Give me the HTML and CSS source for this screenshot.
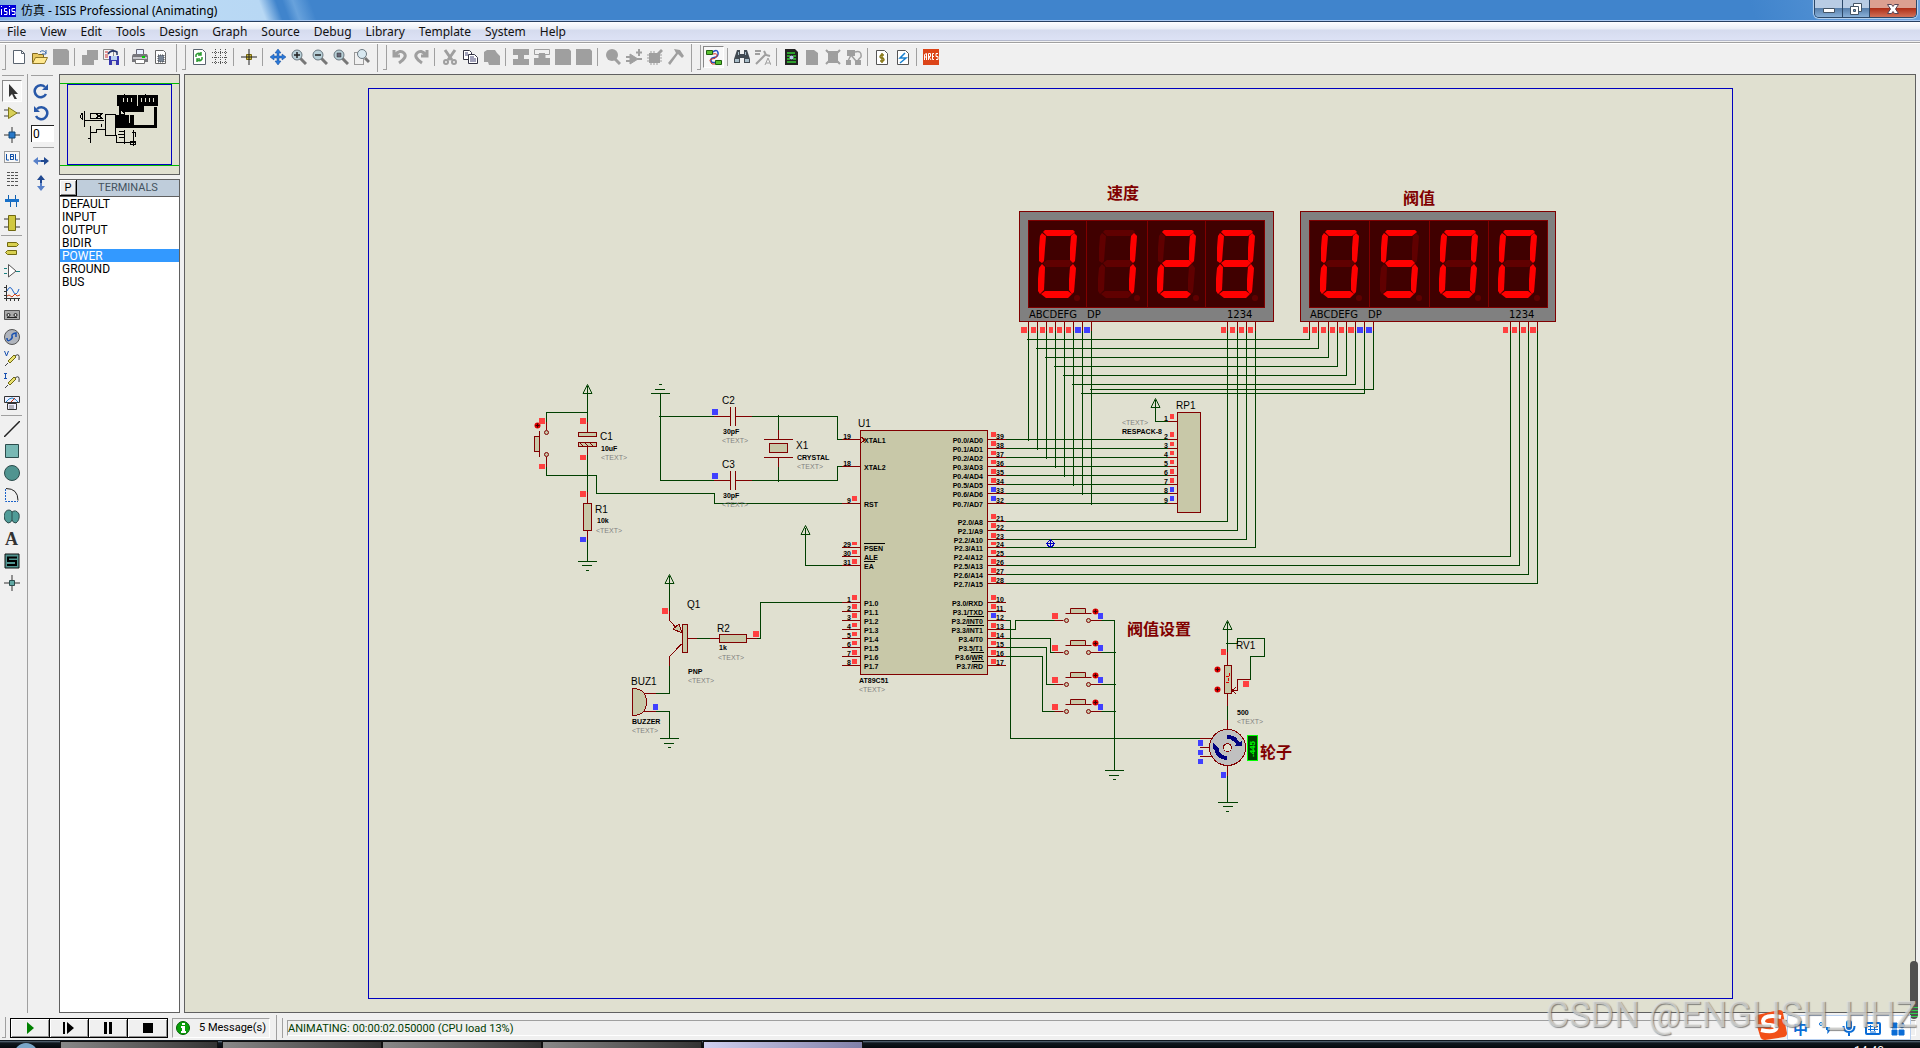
FILE: index.html
```html
<!DOCTYPE html>
<html lang="zh-CN">
<head>
<meta charset="utf-8">
<title>仿真 - ISIS Professional (Animating)</title>
<link rel="stylesheet" href="styles.css">
</head>
<body>
<svg class="sprite" aria-hidden="true">
  <symbol id="i-new" viewBox="0 0 16 16"><path d="M2.500 1.500h8l3 3v10h-11z" fill="#fff" stroke="#5a6470"/><path d="M10.500 1.500v3h3" fill="none" stroke="#5a6470"/></symbol>
  <symbol id="i-open" viewBox="0 0 16 16"><path d="M.5 13.500v-9h5l1 1h5v8z" fill="#e8c860" stroke="#806820"/><path d="M.5 14.500l3-6h12l-3 6z" fill="#ffe890" stroke="#907828"/><path d="M8 3q3-3 6 1M14 1v4h-4" fill="none" stroke="#3a6aa8"/></symbol>
  <symbol id="i-block" viewBox="0 0 16 16"><path d="M0 0h14l2 2v14H0z" fill="#9f9f9f"/></symbol>
  <symbol id="i-section" viewBox="0 0 16 16"><path d="M5 1h11v10h-4v5H0V6h5z" fill="#9f9f9f"/></symbol>
  <symbol id="i-export" viewBox="0 0 16 16"><path d="M.5.500h10v10h-10z" fill="#f4f4f4" stroke="#888"/><path d="M2 3h3M2 6h3M2 8h3" stroke="#c33"/><path d="M5 5q3-5 9-2v3" fill="none" stroke="#236" stroke-width="1.500"/><path d="M6 7h10v9H6z" fill="#3838b0"/><path d="M8 7h6v4H8z" fill="#b8d0f0"/><path d="M9 12h4v4H9z" fill="#ddd"/></symbol>
  <symbol id="i-print" viewBox="0 0 16 16"><path d="M4.500.500h7v6h-7z" fill="#e8f0ff" stroke="#667"/><path d="M1 5h14l1 2v6H0V7z" fill="#77777c"/><path d="M1 8h14v2H1z" fill="#c8c8cc"/><path d="M3.500 10.500h9v4h-9z" fill="#fff" stroke="#777"/><path d="M10 7h3v2h-3z" fill="#0c0"/></symbol>
  <symbol id="i-area" viewBox="0 0 16 16"><path d="M2.500 1.500h8l2 2v11h-10z" fill="#fff" stroke="#666"/><path d="M5 6h6v7H5z" fill="#788494" stroke="#444" stroke-dasharray="1 1"/></symbol>
  <symbol id="i-refresh" viewBox="0 0 16 16"><path d="M2.500.500h9l3 3v12h-12z" fill="#fff" stroke="#5a6470"/><path d="M5 8V6q2-3 5-1M10 3v3H7M11 8v2q-2 3-5 1M6 13v-3h3" fill="none" stroke="#2c9b32" stroke-width="1.500"/></symbol>
  <symbol id="i-grid" viewBox="0 0 16 16"><path d="M0 3.500h16M0 8.500h16M0 13.500h16M3.500 0v16M8.500 0v16M13.500 0v16" stroke="#555" stroke-dasharray="1 1"/></symbol>
  <symbol id="i-origin" viewBox="0 0 16 16"><path d="M5.500 5.500h5v5h-5z" fill="#c8b840" stroke="#786810"/><path d="M0 8h16M8 0v16" stroke="#222"/></symbol>
  <symbol id="i-pan" viewBox="0 0 16 16"><path d="M8 0l3 4H9v3h3V5l4 3-4 3V9H9v3h2l-3 4-3-4h2V9H4v2L0 8l4-3v2h3V4H5z" fill="#2a78d8" stroke="#174c98" stroke-width=".5"/></symbol>
  <symbol id="i-lens" viewBox="0 0 16 16"><path d="M9 9l6 6" stroke="#777" stroke-width="3"/><circle cx="6" cy="6" r="5" fill="#b8d0d8" stroke="#6b7880"/></symbol>
  <symbol id="i-zin" viewBox="0 0 16 16"><use href="#i-lens"/><path d="M3 6h6M6 3v6" stroke="#222" stroke-width="1.500"/></symbol>
  <symbol id="i-zout" viewBox="0 0 16 16"><use href="#i-lens"/><path d="M3 6h6" stroke="#222" stroke-width="1.500"/></symbol>
  <symbol id="i-zall" viewBox="0 0 16 16"><use href="#i-lens"/><path d="M4 4h4v4H4z" fill="#667" stroke="#333" stroke-width=".5"/></symbol>
  <symbol id="i-zarea" viewBox="0 0 16 16"><path d="M.5 3.500h9v12h-9z" fill="none" stroke="#444" stroke-dasharray="1 1"/><path d="M11 9l4 4" stroke="#777" stroke-width="3"/><circle cx="8" cy="5" r="4.500" fill="#d8e8f0" stroke="#6b7880"/></symbol>
  <symbol id="i-undo" viewBox="0 0 16 16"><path d="M2 1v6h6M3 6q5-6 9-2t-5 10" fill="none" stroke="#9f9f9f" stroke-width="3"/></symbol>
  <symbol id="i-redo" viewBox="0 0 16 16"><path d="M14 1v6H8M13 6Q8 0 4 4t5 10" fill="none" stroke="#9f9f9f" stroke-width="3"/></symbol>
  <symbol id="i-cut" viewBox="0 0 16 16"><path d="M3 1l7 10M13 1L6 11" stroke="#9f9f9f" stroke-width="3"/><circle cx="4" cy="13" r="2" fill="none" stroke="#9f9f9f" stroke-width="2"/><circle cx="12" cy="13" r="2" fill="none" stroke="#9f9f9f" stroke-width="2"/></symbol>
  <symbol id="i-copy" viewBox="0 0 16 16"><path d="M.5 1.500h6l2 2v7h-8z" fill="#fff" stroke="#334"/><path d="M5.500 5.500h6l3 3v6h-9z" fill="#fff" stroke="#334"/><path d="M2 4h3M2 6h3M7 8h4M7 10h6M7 12h6" stroke="#447"/></symbol>
  <symbol id="i-paste" viewBox="0 0 16 16"><path d="M3 1h8l2 3 3 3v9H5l-1-3H0V3z" fill="#9f9f9f"/></symbol>
  <symbol id="i-tie" viewBox="0 0 16 16"><path d="M0 0h16v6h-5v4h5v6H0v-6h5V6H0z" fill="#9f9f9f"/></symbol>
  <symbol id="i-tieo" viewBox="0 0 16 16"><path d="M.5.500h15v5H11v4h5v6H0v-6h5v-4H.5z" fill="none" stroke="#9f9f9f"/><path d="M0 10h16v6H0zM5 4h6v6H5z" fill="#9f9f9f"/></symbol>
  <symbol id="i-pick" viewBox="0 0 16 16"><circle cx="7" cy="6" r="6" fill="#9f9f9f"/><path d="M10 10l5 5" stroke="#9f9f9f" stroke-width="3"/></symbol>
  <symbol id="i-gate" viewBox="0 0 16 16"><path d="M4 5l8 5-8 5z" fill="#9f9f9f" stroke="#9f9f9f"/><path d="M0 8h5M0 12h5M11 10h5M13 0v7M10 3.500h6" stroke="#9f9f9f" stroke-width="2"/></symbol>
  <symbol id="i-pkg" viewBox="0 0 16 16"><path d="M2 4h8l4-4 2 2-3 3v9H2z" fill="#9f9f9f"/><path d="M0 6h15M0 9h15M0 12h15M4 2v14M7 2v14M10 4v12" stroke="#9f9f9f"/></symbol>
  <symbol id="i-hammer" viewBox="0 0 16 16"><path d="M6 0l6 1 4 6-2 2-4-4L2 16l-2-2L8 4z" fill="#9f9f9f"/></symbol>
  <symbol id="i-wire" viewBox="0 0 16 16"><path d="M6 3.500q5-4 6 0t-4 5-2 5h3" fill="none" stroke="#2050c0" stroke-width="1.500"/><path d="M7 5q5-1 4 2t-5 3 0 5h3" fill="none" stroke="#d03020"/><path d="M.5 1.500h6v4h-6zM9.500 11.500h6v4h-6z" fill="#58c030" stroke="#206010"/></symbol>
  <symbol id="i-find" viewBox="0 0 16 16"><path d="M3 1h3v4h4V1h3l3 9v4h-6V9H6v5H0v-4z" fill="#424a52"/><path d="M1 10h4v3H1zM11 10h4v3h-4zM4 3h1v3H4zM11 3h1v3h-1z" fill="#a8bcc8"/></symbol>
  <symbol id="i-tool" viewBox="0 0 16 16"><path d="M0 2h6M0 5h5M1 15L11 5M9 2l2 4 4 1" stroke="#9f9f9f" stroke-width="2" fill="none"/><path d="M10 16l3-7 3 7M11 14h4" fill="none" stroke="#9f9f9f"/></symbol>
  <symbol id="i-pcb" viewBox="0 0 16 16"><path d="M2 0h10l3 3v13H2z" fill="#222"/><path d="M4 4h8M4 7h3M10 7h3M4 10h3M10 10h3M4 13h9" stroke="#3c3" stroke-width="1.500"/><circle cx="8.500" cy="8.500" r="2" fill="#bce"/></symbol>
  <symbol id="i-page" viewBox="0 0 16 16"><path d="M2 1h8l4 3v12H2z" fill="#9f9f9f"/></symbol>
  <symbol id="i-del" viewBox="0 0 16 16"><path d="M3 2h10v12H3z" fill="#9f9f9f"/><path d="M1 1l14 14M15 1L1 15" stroke="#9f9f9f" stroke-width="2"/></symbol>
  <symbol id="i-tree" viewBox="0 0 16 16"><path d="M1 1h8v6H1zM0 11h5v5H0zM9 11h6v5H9z" fill="#9f9f9f"/><path d="M9 3q7-2 6 5l-3 3M5 6l-3 6M5 6l5 6" fill="none" stroke="#9f9f9f" stroke-width="1.500"/></symbol>
  <symbol id="i-bom" viewBox="0 0 16 16"><path d="M2.500 1.500h8l3 3v11h-11z" fill="#fff" stroke="#555"/><path d="M10 6H7q-2 2 0 3h2q2 2 0 3H6M8 4v10" fill="none" stroke="#887818" stroke-width="1.500"/></symbol>
  <symbol id="i-erc" viewBox="0 0 16 16"><path d="M2.500 1.500h8l3 3v11h-11z" fill="#fff" stroke="#555"/><path d="M10 4L5 9h6l-6 5" fill="none" stroke="#1880d0" stroke-width="1.500"/></symbol>
  <symbol id="i-ares" viewBox="0 0 16 16"><path d="M0 0h16v16H0z" fill="#dc4418"/><path d="M1.500 11V5.500l2-1V11M2 8h1M5.500 11V4.500h2v3h-2M6 8l2 3M11 4.500H9.500v6H11M9.500 7.500H11M15 4.500h-2v3h2v3h-2" fill="none" stroke="#fff"/></symbol>
  <symbol id="i-select" viewBox="0 0 16 16"><path d="M5 1v13l3-3 3 6 2-1-3-5h4z" fill="#333"/></symbol>
  <symbol id="i-comp" viewBox="0 0 16 16"><path d="M0 5h4M0 11h4M12 8h4" stroke="#444"/><path d="M4.500 2.500L13 8l-8.500 5.500z" fill="#d8d058" stroke="#807818"/></symbol>
  <symbol id="i-junc" viewBox="0 0 16 16"><path d="M0 8h16M8 0v16" stroke="#333"/><path d="M5 5h6v6H5z" fill="#2878c8" stroke="#124878"/></symbol>
  <symbol id="i-lbl" viewBox="0 0 16 16"><path d="M.5 2.500h15v11H.5z" fill="#f8f8f8" stroke="#444" stroke-dasharray="1 1"/><path d="M2.500 5v6H5M6.500 5.500h3v2h-3v3h3v-3M6.500 5v6M11.500 5v6H14" fill="none" stroke="#1050a8"/></symbol>
  <symbol id="i-text" viewBox="0 0 16 16"><path d="M3 1.500h11M3 4.500h11M3 7.500h11M3 10.500h11M3 14.500h11" stroke="#555" stroke-dasharray="3 1"/></symbol>
  <symbol id="i-bus" viewBox="0 0 16 16"><path d="M4.500 2v6M11.500 2v6M6.500 8v6M12.500 8v6" stroke="#1060b0"/><path d="M1 6h14v3H1z" fill="#1870c8"/></symbol>
  <symbol id="i-sub" viewBox="0 0 16 16"><path d="M0 4h16M0 12h16" stroke="#333"/><path d="M4.500.500h7v15h-7z" fill="#d0c840" stroke="#706810"/></symbol>
  <symbol id="i-term" viewBox="0 0 16 16"><path d="M3.500 1.500h9l2 2-2 2h-9z" fill="#d8d050" stroke="#706810"/><path d="M3.500 9.500h9v4h-9l-2-2z" fill="#d8d050" stroke="#706810"/></symbol>
  <symbol id="i-pin" viewBox="0 0 16 16"><path d="M4.500 1.500V14L12 8z" fill="#fff" stroke="#555"/><path d="M0 5.500h3M0 10.500h3M12 8.500h4" stroke="#188080"/></symbol>
  <symbol id="i-graph" viewBox="0 0 16 16"><path d="M2.500 0v16M0 13.500h16M0 2.500h2M0 6.500h2M0 10.500h2M6.500 14v2M10.500 14v2M14.500 14v2" stroke="#333"/><path d="M3 6q3-7 6 0t6-2" fill="none" stroke="#1860c8"/><path d="M3 11l2-1 3 2 3-3 2 2 3-1" fill="none" stroke="#d04018"/></symbol>
  <symbol id="i-tape" viewBox="0 0 16 16"><path d="M.5 3.500h15v9H.5z" fill="#aaa" stroke="#555"/><circle cx="4.500" cy="8" r="1.500" fill="#ddd" stroke="#222"/><circle cx="11.500" cy="8" r="1.500" fill="#ddd" stroke="#222"/><path d="M3 10.500h10" stroke="#222"/></symbol>
  <symbol id="i-gen" viewBox="0 0 16 16"><circle cx="8" cy="8" r="7.500" fill="#b0b4bc" stroke="#555"/><path d="M3 9q0 4 3 2t2-4 4-3v4" fill="none" stroke="#1850b0" stroke-width="1.500"/></symbol>
  <symbol id="i-probe" viewBox="0 0 16 16"><path d="M1 15l3-3M11 5q5-4 4 4" fill="none" stroke="#444"/><path d="M4 10l6-6 2 2-6 6z" fill="#e8e070" stroke="#706810"/></symbol>
  <symbol id="i-volt" viewBox="0 0 16 16"><use href="#i-probe"/><path d="M.5 0l2 5 2-5" fill="none" stroke="#1850b0"/></symbol>
  <symbol id="i-amp" viewBox="0 0 16 16"><use href="#i-probe"/><path d="M0 .5h3M0 5.500h3M1.500 0v6" stroke="#1850b0"/></symbol>
  <symbol id="i-meter" viewBox="0 0 16 16"><path d="M.5 1.500h15v6H.5zM3.500 8.500h9v6h-9z" fill="#eef" stroke="#333"/><path d="M2 7q6-8 12 0" fill="none" stroke="#28c"/><path d="M7 7l4-4" stroke="#c30"/><path d="M5 11h5M5 13h5" stroke="#777"/></symbol>
  <symbol id="i-line" viewBox="0 0 16 16"><path d="M0 16L16 0" stroke="#222" stroke-width="1.500"/></symbol>
  <symbol id="i-rect" viewBox="0 0 16 16"><path d="M1.500 1.500h13v13h-13z" fill="#78b8b4" stroke="#2c4c4c"/></symbol>
  <symbol id="i-circ" viewBox="0 0 16 16"><circle cx="8" cy="8" r="7.500" fill="#509490" stroke="#2c4c4c"/></symbol>
  <symbol id="i-arc" viewBox="0 0 16 16"><path d="M1.500 2v12.500H14" fill="none" stroke="#1860c8" stroke-dasharray="2 1"/><path d="M2 1.500q12 0 12 12" fill="none" stroke="#222"/></symbol>
  <symbol id="i-path" viewBox="0 0 16 16"><path d="M8 3q4-3 7 2 1 6-3 9-3 0-4-3-1 3-4 3-4-2-4-7 1-6 5-6 2 0 3 2z" fill="#509c98" stroke="#2c4c4c"/><path d="M8 3v8" stroke="#2c4c4c"/></symbol>
  <symbol id="i-sym" viewBox="0 0 16 16"><path d="M1 1h14v14H1z" fill="#509490" stroke="#111"/><path d="M13 4.500H4v3.500h8v4H3" fill="none" stroke="#000" stroke-width="2"/></symbol>
  <symbol id="i-mark" viewBox="0 0 16 16"><path d="M0 8h16M8 0v16" stroke="#333"/><path d="M5.500 5.500h5v5h-5z" fill="#60a8a4" stroke="#2c4c4c"/></symbol>
  <symbol id="i-cw" viewBox="0 0 16 16"><path d="M13 11a6 6 0 1 1-1-7" fill="none" stroke="#2858a8" stroke-width="2.500"/><path d="M15 1v6H9z" fill="#2858a8"/></symbol>
  <symbol id="i-ccw" viewBox="0 0 16 16"><path d="M3 11a6 6 0 1 0 1-7" fill="none" stroke="#2858a8" stroke-width="2.500"/><path d="M1 1v6h6z" fill="#2858a8"/></symbol>
  <symbol id="i-mx" viewBox="0 0 16 16"><path d="M0 8l5-4v3h3v2H5v3z" fill="#5880c8"/><path d="M16 8l-5-4v3H8v2h3v3z" fill="#204890"/></symbol>
  <symbol id="i-my" viewBox="0 0 16 16"><path d="M8 0l4 5H9v3H7V5H4z" fill="#204890"/><path d="M8 16l4-5H9V8H7v3H4z" fill="#5880c8"/></symbol>

  <polygon id="sa" points="7,0 35,0 37,2 32,6 9,6 5,2"/>
  <polygon id="sb" points="36,3 39,6 38,19 37,31 35,33 32,30 32,18 33,6"/>
  <polygon id="sc" points="35,34 38,38 37,50 36,62 34,64 31,60 31,50 32,37"/>
  <polygon id="sd" points="3,64 7,61 30,61 34,64 30,68 8,68"/>
  <polygon id="se" points="4,34 7,37 6,60 2,64 0,61 0,49 1,38"/>
  <polygon id="sf" points="4,3 8,6 7,18 6,31 4,33 1,31 1,18 2,6"/>
  <polygon id="sg" points="5,33 9,30 32,30 35,33 31,37 8,37"/>
  <g id="d8"><use href="#sa"/><use href="#sb"/><use href="#sc"/><use href="#sd"/><use href="#se"/><use href="#sf"/><use href="#sg"/></g>
  <g id="d0"><use href="#sa"/><use href="#sb"/><use href="#sc"/><use href="#sd"/><use href="#se"/><use href="#sf"/></g>
  <g id="d1"><use href="#sb"/><use href="#sc"/></g>
  <g id="d2"><use href="#sa"/><use href="#sb"/><use href="#sg"/><use href="#se"/><use href="#sd"/></g>
  <g id="d5"><use href="#sa"/><use href="#sf"/><use href="#sg"/><use href="#sc"/><use href="#sd"/></g>
  <g id="off"><use href="#d8"/><circle cx="39" cy="68" r="3"/></g>
  <g id="dot"><circle r="3" fill="#e00000" stroke="none"/><path d="M-2 0h4M0-2v4" stroke="#400000"/></g>
  <g id="switch"><path d="M-12 0h9M24 0h11" stroke="#800000"/><path d="M-1-7h26" stroke="#800000"/><path d="M4-12v5h15v-5z" fill="#c8c8a8" stroke="#800000"/><circle r="2" fill="#c8c8a8" stroke="#800000"/><circle cx="22" r="2" fill="#c8c8a8" stroke="#800000"/><use href="#dot" x="29" y="-9"/><path d="M-14.500-7.500h6v6h-6z" fill="#ff4040"/><path d="M31.500-7.500h5v6h-5z" fill="#4040ff"/></g>
</svg>

<header class="titlebar">
  <svg class="app-icon" viewBox="0 0 16 12" aria-hidden="true"><path d="M0 0h16v12H0z" fill="#0000d8"/><path d="M1.500 4v6M1.500 1v1M7 3.500H4.500v3H7v3H4M9.500 4v6M9.500 1v1M15 3.500h-3v3h3v3h-3" fill="none" stroke="#fff"/></svg>
  <h1>仿真 - ISIS Professional (Animating)</h1>
  <div class="win-buttons">
    <button class="wb wb-min" aria-label="Minimize"><svg viewBox="0 0 12 12"><path d="M.5 5.500h11v4H.5z" fill="#fff" stroke="#456"/></svg></button>
    <button class="wb wb-res" aria-label="Restore"><svg viewBox="0 0 12 12"><path d="M3.500.500h8v8h-8z" fill="#fff" stroke="#456"/><path d="M.5 3.500h8v8h-8z" fill="#fff" stroke="#456"/><path d="M3.500 6.500h2v2h-2z" fill="#69c" stroke="#456"/></svg></button>
    <button class="wb wb-close" aria-label="Close"><svg viewBox="0 0 12 12"><path d="M.5 1.500h4l1.500 2 1.500-2h4L8.500 6l3 4.500h-4L6 8.500l-1.500 2h-4l3-4.500z" fill="#fff" stroke="#545"/></svg></button>
  </div>
</header>

<nav class="menubar">
  <a href="#">File</a><a href="#">View</a><a href="#">Edit</a><a href="#">Tools</a><a href="#">Design</a><a href="#">Graph</a><a href="#">Source</a><a href="#">Debug</a><a href="#">Library</a><a href="#">Template</a><a href="#">System</a><a href="#">Help</a>
</nav>

<div class="toolbar">
  <div class="group">
    <button aria-label="New"><svg><use href="#i-new"/></svg></button><button aria-label="Open"><svg><use href="#i-open"/></svg></button><button aria-label="Save"><svg><use href="#i-block"/></svg></button><i class="sep"></i>
    <button aria-label="Import section"><svg><use href="#i-section"/></svg></button><button aria-label="Export section"><svg><use href="#i-export"/></svg></button><i class="sep"></i>
    <button aria-label="Print"><svg><use href="#i-print"/></svg></button><button aria-label="Mark output area"><svg><use href="#i-area"/></svg></button>
  </div>
  <div class="group">
    <button aria-label="Redraw"><svg><use href="#i-refresh"/></svg></button><button aria-label="Grid"><svg><use href="#i-grid"/></svg></button><i class="sep"></i>
    <button aria-label="Origin"><svg><use href="#i-origin"/></svg></button><i class="sep"></i>
    <button aria-label="Pan"><svg><use href="#i-pan"/></svg></button><button aria-label="Zoom in"><svg><use href="#i-zin"/></svg></button><button aria-label="Zoom out"><svg><use href="#i-zout"/></svg></button><button aria-label="Zoom all"><svg><use href="#i-zall"/></svg></button><button aria-label="Zoom area"><svg><use href="#i-zarea"/></svg></button>
  </div>
  <div class="group">
    <button aria-label="Undo"><svg><use href="#i-undo"/></svg></button><button aria-label="Redo"><svg><use href="#i-redo"/></svg></button><i class="sep"></i>
    <button aria-label="Cut"><svg><use href="#i-cut"/></svg></button><button aria-label="Copy"><svg><use href="#i-copy"/></svg></button><button aria-label="Paste"><svg><use href="#i-paste"/></svg></button><i class="sep"></i>
    <button aria-label="Block copy"><svg><use href="#i-tie"/></svg></button><button aria-label="Block move"><svg><use href="#i-tieo"/></svg></button><button aria-label="Block rotate"><svg><use href="#i-block"/></svg></button><button aria-label="Block delete"><svg><use href="#i-block"/></svg></button><i class="sep"></i>
    <button aria-label="Pick parts"><svg><use href="#i-pick"/></svg></button><button aria-label="Make device"><svg><use href="#i-gate"/></svg></button><button aria-label="Packaging"><svg><use href="#i-pkg"/></svg></button><button aria-label="Decompose"><svg><use href="#i-hammer"/></svg></button>
  </div>
  <div class="group tight">
    <button class="pressed" aria-label="Wire autorouter" aria-pressed="true"><svg><use href="#i-wire"/></svg></button><i class="sep"></i>
    <button aria-label="Search"><svg><use href="#i-find"/></svg></button><button aria-label="Property assignment"><svg><use href="#i-tool"/></svg></button><i class="sep"></i>
    <button aria-label="Design explorer"><svg><use href="#i-pcb"/></svg></button><button aria-label="New sheet"><svg><use href="#i-page"/></svg></button><button aria-label="Remove sheet"><svg><use href="#i-del"/></svg></button><button aria-label="Exit to parent"><svg><use href="#i-tree"/></svg></button><i class="sep"></i>
    <button aria-label="Bill of materials"><svg><use href="#i-bom"/></svg></button><button aria-label="Electrical rule check"><svg><use href="#i-erc"/></svg></button><i class="sep"></i>
    <button aria-label="Netlist to ARES"><svg><use href="#i-ares"/></svg></button>
  </div>
</div>

<main class="work">
  <div class="modes">
    <button class="pressed" aria-label="Selection"><svg><use href="#i-select"/></svg></button><button aria-label="Component"><svg><use href="#i-comp"/></svg></button><button aria-label="Junction"><svg><use href="#i-junc"/></svg></button><button aria-label="Wire label"><svg><use href="#i-lbl"/></svg></button><button aria-label="Text script"><svg><use href="#i-text"/></svg></button><button aria-label="Buses"><svg><use href="#i-bus"/></svg></button><button aria-label="Subcircuit"><svg><use href="#i-sub"/></svg></button>
    <i class="hsep"></i>
    <button aria-label="Terminals"><svg><use href="#i-term"/></svg></button><button aria-label="Device pins"><svg><use href="#i-pin"/></svg></button><button aria-label="Graph"><svg><use href="#i-graph"/></svg></button><button aria-label="Tape recorder"><svg><use href="#i-tape"/></svg></button><button aria-label="Generator"><svg><use href="#i-gen"/></svg></button><button aria-label="Voltage probe"><svg><use href="#i-volt"/></svg></button><button aria-label="Current probe"><svg><use href="#i-amp"/></svg></button><button aria-label="Instruments"><svg><use href="#i-meter"/></svg></button>
    <i class="hsep"></i>
    <button aria-label="2D line"><svg><use href="#i-line"/></svg></button><button aria-label="2D box"><svg><use href="#i-rect"/></svg></button><button aria-label="2D circle"><svg><use href="#i-circ"/></svg></button><button aria-label="2D arc"><svg><use href="#i-arc"/></svg></button><button aria-label="2D path"><svg><use href="#i-path"/></svg></button><button class="letter" aria-label="2D text">A</button><button aria-label="2D symbol"><svg><use href="#i-sym"/></svg></button><button aria-label="2D marker"><svg><use href="#i-mark"/></svg></button>
  </div>
  <div class="orient">
    <button aria-label="Rotate clockwise"><svg><use href="#i-cw"/></svg></button><button aria-label="Rotate anticlockwise"><svg><use href="#i-ccw"/></svg></button>
    <input type="text" value="0" aria-label="Rotation angle">
    <i class="hsep"></i>
    <button aria-label="X mirror"><svg><use href="#i-mx"/></svg></button><button aria-label="Y mirror"><svg><use href="#i-my"/></svg></button>
  </div>
  <aside class="side">
    <div class="overview">
      <svg viewBox="60 75 119 99" shape-rendering="crispEdges" role="img" aria-label="Overview">
        <path d="M60 83.500h119M60 165.500h119" stroke="#00b800"/><path d="M67.500 84.500h104v80h-104z" fill="none" stroke="#0000c0"/>
        <path d="M117 95h20v11h-20zM138 95h20v11h-20zM119 106h25v6h-25zM116 115h18v10h20v-18h3v21h-41z"/>
        <path d="M119 106h6v9h-6z"/><path d="M124.500 94v2M145.500 94v2" stroke="#000"/>
        <path d="M123 98h1v4h-1zM127 98h1v4h-1zM131 98h1v4h-1zM141 98h1v4h-1zM145 98h1v4h-1zM149 98h1v4h-1zM153 98h1v4h-1zM129 114h1v9h-1zM121 111l4 3h-4z" fill="#e0e0d0"/>
        <path d="M105.500 114.500h10v21h-10zM84.500 111v16M80 117l2-4v6zM84 120.500h20M90 113.500h13M90 118.500h13M90.500 113v5M96 114l6 4M102 114l-6 4M90.500 126v17M91 132.500h5v-3h9M88 138h3M101.500 124v3M116.500 135v7h18M124.500 130v14M119 131h5M118 134h6M119 137h5M133.500 130v16M132 132h3v5M130 141h5v3h-5z" fill="none" stroke="#000"/>
      </svg>
    </div>
    <section class="picker">
      <div class="picker-head"><button>P</button><h2>TERMINALS</h2></div>
      <ul><li>DEFAULT</li><li>INPUT</li><li>OUTPUT</li><li>BIDIR</li><li class="on">POWER</li><li>GROUND</li><li>BUS</li></ul>
    </section>
  </aside>
  <div class="canvas">
    <svg class="sheet" viewBox="185 75 1730 937" preserveAspectRatio="xMinYMin meet" role="img" aria-label="Schematic">
      <g shape-rendering="crispEdges" fill="none" stroke-width="1">
        <path d="M368.500 88.500h1364v910h-1364z" stroke="#0000c0"/>

        <!-- wires -->
        <g stroke="#004000">
          <path d="M1028.500 331v110M1037.500 331v119M1046.500 331v128M1055.500 331v137M1064.500 331v146M1073.500 331v155M1082.500 331v164M1091.500 331v174"/>
          <path d="M1027 339.500h282.500V331M1036 348.500h282.500V331M1045 357.500h283.500V331M1054 366.500h283.500V331M1063 375.500h283.500V331M1072 384.500h283.500V331M1081 393.500h283.500V331M1090 389.500h283.500V331"/>
          <path d="M1006 439.500h162M1006 448.500h162M1006 457.500h162M1006 466.500h162M1006 475.500h162M1006 484.500h162M1006 493.500h162M1006 503.500h162"/>
          <path d="M1006 521.500h221.500V331M1006 530.500h231.500V331M1006 539.500h240.500V331M1006 547.500h249.500V331M1006 556.500h504.500V331M1006 565.500h513.500V331M1006 574.500h522.500V331M1006 583.500h531.500V331"/>
          <path d="M1155.500 400v21.500h13"/>
          <path d="M587.500 386v36M588 412.500h-41.500v10M587.500 455v37M546.500 467v8.500h50v18h118v10H842M587.500 540v21"/>
          <path d="M660.500 394v86.500H714M659 416.500h55M752 416.500h85.500v23h5M752 480.500h85.500v-14h5M778.500 415v15M778.500 467v15"/>
          <path d="M805.500 528v37.500H842"/>
          <path d="M669.500 576v35M669.500 666v27.500H656M656 711.500h13.500V738M697 638.500h13M757 638.500h3.500v-36H842"/>
          <path d="M1006 620.500h4.500v118H1200M1006 629.500h9.500v-9h39.500M1006 638.500h44.500v14h5M1006 647.500h40.500v37h9M1006 656.500h36.500v55h13"/>
          <path d="M1101 620.500h13.500v150M1101 652.500h15M1101 684.500h15M1101 711.500h15"/>
          <path d="M1227.500 622v30M1226 643.500h11.500v-5h27v18h-14v23M1227.500 706v14M1227.500 776v26"/>
        </g>
        <!-- pins -->
        <g stroke="#800000">
          <path d="M1028.500 321v10M1037.500 321v10M1046.500 321v10M1055.500 321v10M1064.500 321v10M1073.500 321v10M1082.500 321v10M1091.500 321v10M1227.500 321v10M1237.500 321v10M1246.500 321v10M1255.500 321v10"/>
          <path d="M1309.500 321v10M1318.500 321v10M1328.500 321v10M1337.500 321v10M1346.500 321v10M1355.500 321v10M1364.500 321v10M1373.500 321v10M1510.500 321v10M1519.500 321v10M1528.500 321v10M1537.500 321v10"/>
          <path d="M988 439.500h18M988 448.500h18M988 457.500h18M988 466.500h18M988 475.500h18M988 484.500h18M988 493.500h18M988 503.500h18M988 521.500h18M988 530.500h18M988 539.500h18M988 547.500h18M988 556.500h18M988 565.500h18M988 574.500h18M988 583.500h18M988 602.500h18M988 611.500h18M988 620.500h18M988 629.500h18M988 638.500h18M988 647.500h18M988 656.500h18M988 665.500h18"/>
          <path d="M842 439.500h18M842 466.500h18M842 503.500h18M842 547.500h18M842 556.500h18M842 565.500h18M842 602.500h18M842 611.500h18M842 620.500h18M842 629.500h18M842 638.500h18M842 647.500h18M842 656.500h18M842 665.500h18"/>
          <path d="M1168 421.500h9M1168 439.500h9M1168 448.500h9M1168 457.500h9M1168 466.500h9M1168 475.500h9M1168 484.500h9M1168 493.500h9M1168 503.500h9"/>
          <path d="M860.500 430.500h127v244h-127zM1177.500 412.500h23v100h-23z" fill="#c8c8a8"/>
          <path d="M861 437l4 3-4 3"/>
          <!-- reset circuit -->
          <path d="M546.500 422v8M546.500 457v10M539.500 431v26M587.500 422v10M587.500 447v8M587.500 492v11M587.500 531v9"/>
          <path d="M534.500 436.500h5v15h-5zM578.500 432.500h18v4h-18zM583.500 503.500h8v27h-8z" fill="#c8c8a8"/>
          <path d="M578.500 442.500h18v4h-18z" fill="#c8c8a8"/><path d="M580 443l3 3M585 443l3 3M590 443l3 3"/>
          <!-- crystal -->
          <path d="M714 416.500h16.500M735.500 416.500H752M730.500 407v19M735.500 407v19M714 480.500h16.500M735.500 480.500H752M730.500 471v19M735.500 471v19"/>
          <path d="M778.500 430v9M764 439.500h29M764 457.500h29M778.500 458v9"/><path d="M769.500 443.500h18v9h-18z" fill="#c8c8a8"/>
          <!-- transistor, resistor, buzzer -->
          <path d="M669.500 611v9.500l12 13M681.500 644l-12 12.500v9M688 638.500h9M710 638.500h9M747 638.500h10M656 693.500h-14M656 711.500h-14"/>
          <path d="M673 629l6-5 3 9zM682.500 624.500h5v28h-5zM719.500 634.500h27v8h-27zM632.500 688.500v27q14 0 14-13.500t-14-13.500z" fill="#c8c8a8"/>
          <!-- potentiometer and motor -->
          <path d="M1227.500 652v13M1227.500 694v12M1227.500 720v10M1250 679.500h-12.500v11H1232M1236 687l-4 3.500 4 3.500M1200 738.500h12M1200 747.500h10M1200 756.500h12M1227.500 765v11"/>
          <path d="M1224.500 665.500h7v28h-7z" fill="#c8c8a8"/>
          <circle cx="1227.500" cy="747.500" r="18" fill="#c0c0c0"/><circle cx="1227.500" cy="747.500" r="4" fill="#e0e0d0"/>
          <path d="M1229 673v3M1226 676.500h3M1228.500 678v3M1226 682.500h3" stroke="#e00000"/>
        </g>
        <path d="M1227 737q9 0 12 9M1227 758q-9 0-11-10" stroke="#000080" stroke-width="4"/><path d="M1234 746h8v-5zM1220 749h-7v-6z" fill="#000080"/>
        <!-- overbars -->
        <path d="M864 543.500h21M864 561.500h11M967 616.500h17M967 625.500h17M971 652.500h13M972 661.500h12" stroke="#000"/>
        <path d="M1046 543.500h9M1050.500 539v9" stroke="#0000c0"/><circle cx="1050.500" cy="543.500" r="3" stroke="#0000c0"/>
        <path d="M1247.500 735.500h10v25h-10z" fill="#004000" stroke="#00ff00"/>
        <!-- LED displays -->
        <path d="M1019.500 211.500h254v110h-254zM1300.500 211.500h255v110h-255z" fill="#808080" stroke="#800000"/>
        <path d="M1028.500 220.500h236v87h-236zM1309.500 220.500h238v87h-238z" fill="#400000" stroke="#800000"/>
        <path d="M1086.500 221v86M1147.500 221v86M1205.500 221v86M1369.500 221v86M1429.500 221v86M1488.500 221v86" stroke="#800000"/>
      </g>
      <g fill="#600000"><use href="#off" x="1038" y="230"/><use href="#off" x="1098" y="230"/><use href="#off" x="1157" y="230"/><use href="#off" x="1216" y="230"/><use href="#off" x="1320" y="230"/><use href="#off" x="1380" y="230"/><use href="#off" x="1439" y="230"/><use href="#off" x="1498" y="230"/></g>
      <g fill="#ff0000"><use href="#d0" x="1038" y="230"/><use href="#d1" x="1098" y="230"/><use href="#d2" x="1157" y="230"/><use href="#d8" x="1216" y="230"/><use href="#d0" x="1320" y="230"/><use href="#d5" x="1380" y="230"/><use href="#d0" x="1439" y="230"/><use href="#d0" x="1498" y="230"/></g>
      <g fill="none">
        <path d="M587.500 384.500l-4.500 9h9zM805.500 525.500l-4.500 9h9zM669.500 574.500l-4.500 9h9zM1155.500 398.500l-4.500 9h9zM1227.500 620.500l-4.500 9h9z" stroke="#004000"/>
        <path d="M578 561.500h19M582 565.500h10M586 570.500h3M651 393.500h19M655 389.500h10M659 384.500h3M660 738.500h19M664 743.500h10M668 747.500h3M1105 770.500h19M1109 775.500h10M1113 779.500h3M1218 802.500h20M1223 806.500h10M1226 811.500h3" stroke="#004000"/>
        <g stroke="#800000"><circle cx="546.500" cy="432.500" r="2" fill="#c8c8a8"/><circle cx="546.500" cy="454.500" r="2" fill="#c8c8a8"/></g>
        <use href="#switch" x="1066.500" y="620.500"/><use href="#switch" x="1066.500" y="652.500"/><use href="#switch" x="1066.500" y="684.500"/><use href="#switch" x="1066.500" y="711.500"/>
        <use href="#dot" x="537.500" y="425.500"/><use href="#dot" x="1217.500" y="669.500"/><use href="#dot" x="1217.500" y="689.500"/>
      </g>
      <!-- logic state squares -->
      <g shape-rendering="crispEdges">
        <path fill="#ff4040" d="M1021 327h6v6h-6zM1031 327h5v6h-5zM1040 327h5v6h-5zM1049 327h4v6h-4zM1057 327h5v6h-5zM1066 327h5v6h-5zM1221 327h5v6h-5zM1230 327h5v6h-5zM1239 327h5v6h-5zM1248 327h5v6h-5zM1303 327h5v6h-5zM1312 327h5v6h-5zM1321 327h5v6h-5zM1330 327h5v6h-5zM1339 327h5v6h-5zM1348 327h6v6h-6zM1503 327h5v6h-5zM1512 327h5v6h-5zM1521 327h5v6h-5zM1530 327h6v6h-6z"/>
        <path fill="#ff4040" d="M991 432h5v5h-5zM991 441h5v5h-5zM991 451h5v4h-5zM991 460h5v4h-5zM991 469h5v5h-5zM991 478h5v5h-5zM991 514h5v5h-5zM991 523h5v5h-5zM991 533h5v5h-5zM991 542h5v3h-5zM991 550h5v4h-5zM991 559h5v5h-5zM991 568h5v5h-5zM991 577h5v5h-5zM991 595h5v5h-5zM991 604h5v5h-5zM991 623h5v5h-5zM991 632h5v5h-5zM991 641h5v4h-5zM991 650h5v5h-5zM991 659h5v5h-5z"/>
        <path fill="#ff4040" d="M852 496h5v5h-5zM852 542h5v3h-5zM852 550h5v4h-5zM852 559h5v5h-5zM852 595h5v5h-5zM852 604h5v5h-5zM852 613h5v5h-5zM852 623h5v4h-5zM852 632h5v4h-5zM852 641h5v4h-5zM852 650h5v5h-5zM852 659h5v5h-5z"/>
        <path fill="#ff4040" d="M1170 414h4v5h-4zM1170 432h4v5h-4zM1170 442h4v4h-4zM1170 451h4v4h-4zM1170 460h4v4h-4zM1170 469h4v5h-4zM1170 478h4v5h-4zM539 418h6v6h-6zM539 464h6v5h-6zM580 418h6v6h-6zM580 455h6v5h-6zM580 491h6v6h-6zM662 608h6v6h-6zM753 631h6v6h-6zM1221 649h5v6h-5zM1243 681h6v6h-6z"/>
        <path fill="#4040ff" d="M1075 327h6v6h-6zM1084 327h6v6h-6zM1357 327h6v6h-6zM1366 327h6v6h-6zM991 487h5v5h-5zM991 496h5v5h-5zM991 613h5v5h-5zM1170 487h4v5h-4zM1170 496h4v5h-4zM580 537h6v5h-6zM712 409h6v6h-6zM712 473h6v6h-6zM653 704h5v6h-5zM1198 740h5v6h-5zM1198 750h5v5h-5zM1198 759h5v5h-5zM1221 772h5v6h-5z"/>
      </g>
      <g class="t-cn"><text x="1107" y="199">速度</text><text x="1403" y="204">阀值</text><text x="1127" y="635">阀值设置</text><text x="1260" y="758">轮子</text></g>
      <g class="t-led"><text x="1029" y="318">ABCDEFG</text><text x="1087" y="318">DP</text><text x="1227" y="318">1234</text><text x="1310" y="318">ABCDEFG</text><text x="1368" y="318">DP</text><text x="1509" y="318">1234</text></g>
      <g class="t-ref"><text x="858" y="427">U1</text><text x="1176" y="409">RP1</text><text x="600" y="440">C1</text><text x="595" y="513">R1</text><text x="722" y="404">C2</text><text x="722" y="468">C3</text><text x="796" y="449">X1</text><text x="687" y="608">Q1</text><text x="717" y="632">R2</text><text x="631" y="685">BUZ1</text><text x="1236" y="649">RV1</text></g>
      <g class="t-val"><text x="859" y="683">AT89C51</text><text x="1122" y="434">RESPACK-8</text><text x="601" y="451">10uF</text><text x="597" y="523">10k</text><text x="723" y="434">30pF</text><text x="723" y="498">30pF</text><text x="797" y="460">CRYSTAL</text><text x="719" y="650">1k</text><text x="688" y="674">PNP</text><text x="632" y="724">BUZZER</text><text x="1237" y="715">500</text></g>
      <g class="t-gray"><text x="859" y="692">&lt;TEXT&gt;</text><text x="1122" y="425">&lt;TEXT&gt;</text><text x="601" y="460">&lt;TEXT&gt;</text><text x="596" y="533">&lt;TEXT&gt;</text><text x="722" y="443">&lt;TEXT&gt;</text><text x="722" y="507">&lt;TEXT&gt;</text><text x="797" y="469">&lt;TEXT&gt;</text><text x="718" y="660">&lt;TEXT&gt;</text><text x="688" y="683">&lt;TEXT&gt;</text><text x="632" y="733">&lt;TEXT&gt;</text><text x="1237" y="724">&lt;TEXT&gt;</text></g>
      <g class="t-val">
        <text x="864" y="443">XTAL1</text><text x="864" y="470">XTAL2</text><text x="864" y="507">RST</text><text x="864" y="551">PSEN</text><text x="864" y="560">ALE</text><text x="864" y="569">EA</text>
        <text x="864" y="606">P1.0</text><text x="864" y="615">P1.1</text><text x="864" y="624">P1.2</text><text x="864" y="633">P1.3</text><text x="864" y="642">P1.4</text><text x="864" y="651">P1.5</text><text x="864" y="660">P1.6</text><text x="864" y="669">P1.7</text>
        <text x="996" y="439">39</text><text x="996" y="448">38</text><text x="996" y="457">37</text><text x="996" y="466">36</text><text x="996" y="475">35</text><text x="996" y="484">34</text><text x="996" y="493">33</text><text x="996" y="503">32</text>
        <text x="996" y="521">21</text><text x="996" y="530">22</text><text x="996" y="539">23</text><text x="996" y="547">24</text><text x="996" y="556">25</text><text x="996" y="565">26</text><text x="996" y="574">27</text><text x="996" y="583">28</text>
        <text x="996" y="602">10</text><text x="996" y="611">11</text><text x="996" y="620">12</text><text x="996" y="629">13</text><text x="996" y="638">14</text><text x="996" y="647">15</text><text x="996" y="656">16</text><text x="996" y="665">17</text>
      </g>
      <g class="t-val t-end">
        <text x="983" y="443">P0.0/AD0</text><text x="983" y="452">P0.1/AD1</text><text x="983" y="461">P0.2/AD2</text><text x="983" y="470">P0.3/AD3</text><text x="983" y="479">P0.4/AD4</text><text x="983" y="488">P0.5/AD5</text><text x="983" y="497">P0.6/AD6</text><text x="983" y="507">P0.7/AD7</text>
        <text x="983" y="525">P2.0/A8</text><text x="983" y="534">P2.1/A9</text><text x="983" y="543">P2.2/A10</text><text x="983" y="551">P2.3/A11</text><text x="983" y="560">P2.4/A12</text><text x="983" y="569">P2.5/A13</text><text x="983" y="578">P2.6/A14</text><text x="983" y="587">P2.7/A15</text>
        <text x="983" y="606">P3.0/RXD</text><text x="983" y="615">P3.1/TXD</text><text x="983" y="624">P3.2/INT0</text><text x="983" y="633">P3.3/INT1</text><text x="983" y="642">P3.4/T0</text><text x="983" y="651">P3.5/T1</text><text x="983" y="660">P3.6/WR</text><text x="983" y="669">P3.7/RD</text>
        <text x="851" y="439">19</text><text x="851" y="466">18</text><text x="851" y="503">9</text><text x="851" y="547">29</text><text x="851" y="556">30</text><text x="851" y="565">31</text><text x="851" y="602">1</text><text x="851" y="611">2</text><text x="851" y="620">3</text><text x="851" y="629">4</text><text x="851" y="638">5</text><text x="851" y="647">6</text><text x="851" y="656">7</text><text x="851" y="665">8</text>
        <text x="1168" y="421">1</text><text x="1168" y="439">2</text><text x="1168" y="448">3</text><text x="1168" y="457">4</text><text x="1168" y="466">5</text><text x="1168" y="475">6</text><text x="1168" y="484">7</text><text x="1168" y="493">8</text><text x="1168" y="503">9</text>
      </g>
      <text class="t-rpm" transform="translate(1255 757) rotate(-90)">-445</text>
    </svg>
  </div>
</main>

<footer class="status">
  <div class="anim">
    <button aria-label="Play"><svg viewBox="0 0 12 12"><path d="M3 0l7 6-7 6z" fill="#008000"/></svg></button><button aria-label="Step"><svg viewBox="0 0 12 12"><path d="M0 0h2v12H0zM4 0l7 6-7 6z"/></svg></button><button aria-label="Pause"><svg viewBox="0 0 12 12"><path d="M2 0h3v12H2zM7 0h3v12H7z"/></svg></button><button aria-label="Stop"><svg viewBox="0 0 12 12"><path d="M1 1h10v10H1z"/></svg></button>
  </div>
  <div class="messages"><svg viewBox="0 0 14 14" aria-hidden="true"><circle cx="7" cy="7" r="6.500" fill="#08a008" stroke="#046004"/><path d="M6 2h3v2H6zM5 5h4v5h1v2H5v-2h1V7H5z" fill="#fff"/></svg><span>5 Message(s)</span></div>
  <div class="state"><p>ANIMATING: 00:00:02.050000 (CPU load 13%)</p></div>
</footer>

<div class="taskbar"><i class="orb"></i><i class="task first"></i><i class="task"></i><i class="task"></i><i class="task"></i><i class="task active"></i><span class="clock">14:40</span></div>

<div class="gauge"></div>
<div class="ime">
  <svg class="logo" viewBox="0 0 32 30" aria-hidden="true"><path d="M2 5L24 0q4 0 4 3l4 20q0 3-3 4L10 30q-4 0-5-4L0 9q0-3 2-4z" fill="#f25018"/><path d="M26 7Q9 4 8 11q0 4 7 4 8 1 6 4-3 4-15 1" fill="none" stroke="#fff" stroke-width="4"/></svg>
  <div class="keys"><span>中</span>
    <svg viewBox="0 0 16 16"><circle cx="4" cy="4" r="1.500" fill="none" stroke="#0a6cd6"/><path d="M9 7h4q1 4-3 7 1-3 0-4H9z" fill="#0a6cd6"/></svg>
    <svg viewBox="0 0 16 16"><rect x="5" width="6" height="10" rx="3" fill="#0a6cd6"/><path d="M2.500 6q0 6 5.500 6t5.500-6M8 12v4" fill="none" stroke="#0a6cd6" stroke-width="2"/></svg>
    <svg viewBox="0 0 16 16"><rect x="1" y="3" width="14" height="11" rx="1" fill="#fff" stroke="#0a6cd6" stroke-width="2"/><path d="M3 6.500h10M3 9.500h10M5 12h6M5.500 5v6M9.500 5v6" stroke="#0a6cd6"/></svg>
    <svg viewBox="0 0 16 16"><path d="M2 3h5v5H2zM2 10h5v5H2zM9 10h5v5H9zM9 6l3-4 3 4-3 2z" fill="#0a6cd6" stroke="#0a6cd6" stroke-linejoin="round"/></svg>
  </div>
</div>
<div class="watermark">CSDN @ENGLISH_HHZ</div>
</body>
</html>
```
FILE: styles.css
```css
* { box-sizing: border-box; }
body {
  margin: 0;
  height: 100vh;
  display: flex;
  flex-direction: column;
  position: relative;
  overflow: hidden;
  background: #f0f0f0;
  color: #000;
  font-family: Roboto, "Liberation Sans", "Noto Sans CJK SC", sans-serif;
  font-size: 11px;
}
button { padding: 0; border: 0; background: none; font: inherit; color: inherit; }
h1, h2, p, ul { margin: 0; padding: 0; font-weight: normal; }
.sprite { position: absolute; width: 0; height: 0; }

/* title bar */
.titlebar {
  flex: none;
  height: 22px;
  display: flex;
  align-items: flex-start;
  border-bottom: 1px solid #284060;
  box-shadow: inset 0 -1px #a8c8f0;
  background: linear-gradient(70deg, #7cacde 0, #a8cced 60px, #bcdaf4 120px, #b8d8f4 250px, #4084cc 266px, #4084cc 272px, #68a2dc 282px, #4084cc 298px, #4084cc 1650px, #5c98d8 1780px, #6ca4e0 100%);
}
.app-icon { width: 16px; height: 12px; margin-top: 5px; }
.titlebar h1 {
  flex: 1;
  padding-left: 5px;
  font: 12px/22px "Noto Sans", "Noto Sans CJK SC", sans-serif;
}
.win-buttons {
  display: flex;
  height: 18px;
  margin-right: 3px;
  border: 1px solid #2c4868;
  border-top: 0;
  border-radius: 0 0 5px 5px;
  overflow: hidden;
  box-shadow: 0 0 1px 1px #c0d8f0;
}
.wb {
  display: flex;
  align-items: center;
  justify-content: center;
  width: 28px;
  border-right: 1px solid #2c4868;
  background: linear-gradient(#b8cce4 0 45%, #5880ac 50%, #88b0d8);
}
.wb svg { width: 12px; height: 12px; }
.wb-res { width: 27px; }
.wb-close { width: 46px; border: 0; background: linear-gradient(#dca090 0 45%, #b03018 50%, #d07058); }

/* menus */
.menubar {
  flex: none;
  height: 21px;
  display: flex;
  background: linear-gradient(#fff, #eaeef6 7px, #d5dbee 8px, #dde2f5 18px);
  border-bottom: 1px solid #a0a0a0;
  box-shadow: inset 0 -1px #f0f0f0, inset 0 -2px #b4b9cc;
}
.menubar a {
  padding: 0 7px;
  color: #111;
  text-decoration: none;
  font: 12px/19px "Noto Sans", sans-serif;
}

/* toolbar */
.toolbar {
  flex: none;
  height: 31px;
  display: flex;
  border-top: 1px solid #fff;
}
.group {
  display: flex;
  align-items: center;
  height: 28px;
  padding: 0 5px 2px 5px;
  border-right: 1px solid #a0a0a0;
}
.group:last-child { border: 0; }
.group::before {
  content: "";
  width: 3px;
  height: 24px;
  margin-right: 2px;
  border-right: 1px solid #a0a0a0;
  border-bottom: 1px solid #a0a0a0;
}
.group:first-child { padding-left: 2px; }
.group button {
  width: 21px;
  height: 22px;
  display: flex;
  align-items: center;
  justify-content: center;
}
.group svg, .modes svg, .orient svg { width: 16px; height: 16px; }
.sep { width: 8px; height: 18px; background: linear-gradient(#a0a0a0, #a0a0a0) 3px 0 / 1px 18px no-repeat; }
.tight .sep { width: 7px; }
.group .pressed, .modes .pressed {
  background: #f8f8f8;
  border: 1px solid #888;
  border-right-color: #fff;
  border-bottom-color: #fff;
}

/* work area */
.work { flex: 1; min-height: 0; display: flex; padding-right: 4px; }
.modes, .orient { display: flex; flex-direction: column; align-items: center; flex: none; }
.modes { width: 28px; padding: 6px 4px 0 0; border-right: 1px solid #a0a0a0; background: linear-gradient(#a0a0a0, #a0a0a0) 2px 1px / 22px 1px no-repeat; }
.orient { width: 31px; padding: 6px 5px 0 0; background: linear-gradient(#a0a0a0, #a0a0a0) 3px 1px / 22px 1px no-repeat; }
.modes button, .orient button { width: 20px; height: 22px; display: flex; flex: none; align-items: center; justify-content: center; }
.modes .letter { font: bold 18px/22px "Liberation Serif", serif; color: #333; }
.hsep { width: 21px; height: 4px; flex: none; background: linear-gradient(#a0a0a0, #a0a0a0) 0 1px / 21px 1px no-repeat; }
.orient { align-items: flex-end; }
.orient button { width: 26px; }
.orient input {
  width: 23px;
  height: 17px;
  margin: 1px 0 4px;
  padding: 0 1px;
  border: 1px solid #222;
  border-width: 1px 0 0 1px;
  background: #fff;
  font: 12px/15px Roboto, sans-serif;
}
.side { width: 121px; margin-right: 4px; flex: none; display: flex; flex-direction: column; gap: 4px; }
.overview { height: 101px; border: 1px solid #606060; background: #e0e0d0; }
.overview svg { display: block; width: 100%; height: 100%; }
.picker { flex: 1; border: 1px solid #606060; background: #fff; }
.picker-head { display: flex; height: 17px; background: #bfcddb; border-bottom: 1px solid #606060; }
.picker-head button {
  width: 17px;
  background: #f0f0f0;
  border: 1px solid #000;
  border-width: 0 1px 1px 0;
  box-shadow: inset 1px 1px #fff, inset -1px -1px #888;
}
.picker-head h2 { flex: 1; text-align: center; font-size: 11px; line-height: 16px; color: #44525e; }
.picker ul { list-style: none; }
.picker li { height: 13px; padding-left: 2px; font-size: 12px; line-height: 14px; }
.picker .on { background: #3399ff; color: #fff; }
.canvas { flex: 1; min-width: 0; border: 1px solid #606060; background: #e0e0d0; }
.sheet { display: block; width: 100%; height: 100%; }

/* schematic lettering */
.t-cn { font: bold 16px "Noto Sans CJK SC", sans-serif; fill: #800000; }
.t-led { font: 10px "DejaVu Sans", sans-serif; }
.t-ref { font: 10px "Liberation Sans", sans-serif; }
.t-val { font: bold 7px "Liberation Sans", sans-serif; }
.t-gray { font: 7px "Liberation Sans", sans-serif; fill: #808080; }
.t-end { text-anchor: end; }
.t-rpm { font: bold 8px "Liberation Sans", sans-serif; fill: #00ff00; }

/* status bar */
.status { flex: none; height: 27px; display: flex; align-items: center; padding: 2px 4px 0 0; }
.status::before { content: ""; width: 3px; height: 20px; margin: 0 4px 0 2px; border-right: 1px solid #a0a0a0; border-bottom: 1px solid #a0a0a0; }
.anim { display: flex; height: 20px; border: 1px solid #000; }
.anim button {
  width: 39px;
  display: flex;
  align-items: center;
  justify-content: center;
  border-right: 1px solid #000;
  box-shadow: inset 1px 1px #fff, inset -1px -1px #909090;
}
.anim button:last-child { border: 0; }
.anim svg { width: 12px; height: 12px; }
.messages {
  display: flex;
  align-items: center;
  gap: 9px;
  width: 98px;
  height: 20px;
  margin-left: 4px;
  padding-left: 3px;
  border: 1px solid #a0a0a0;
  border-right-color: #fff;
  border-bottom-color: #fff;
  white-space: nowrap;
}
.messages svg { width: 14px; height: 14px; flex: none; }
.state { flex: 1; display: flex; align-items: center; height: 100%; margin-left: 6px; border-left: 1px solid #a0a0a0; }
.state::before { content: ""; width: 5px; height: 20px; margin-right: 4px; border-right: 1px solid #a0a0a0; }
.state p {
  flex: 1;
  height: 16px;
  line-height: 15px;
  border: 1px solid #a0a0a0;
  border-right-color: #fff;
  border-bottom-color: #fff;
  color: #003c00;
}

/* desktop taskbar */
.taskbar {
  flex: none;
  height: 8px;
  display: flex;
  overflow: hidden;
  border-top: 1px solid #101820;
  background: linear-gradient(#607080, #10181f 2px, #05090e);
}
.orb { width: 24px; height: 24px; margin: 2px 22px 0 14px; border-radius: 50%; background: #7aa6c8; }
.task { width: 160px; border: 1px solid #111; border-bottom: 0; background: linear-gradient(90deg, #888, #333); }
.task.first { margin-right: 4px; width: 158px; }
.task.active { margin-left: 1px; background: linear-gradient(90deg, #d0d0f0, #8080a8); }
.clock { margin: 3px 36px 0 auto; color: #fff; font-size: 12px; line-height: 14px; }

/* floating desktop widgets */
.gauge {
  position: absolute;
  right: 2px;
  bottom: 29px;
  width: 8px;
  height: 58px;
  border-radius: 4px;
  background: repeating-linear-gradient(#30d050 0 1px, #505050 1px 3px) 0 100% / 8px 12px no-repeat #505050;
}
.ime { position: absolute; right: 9px; bottom: 8px; display: flex; align-items: flex-end; }
.logo { width: 32px; height: 30px; }
.keys {
  display: flex;
  align-items: center;
  justify-content: space-between;
  width: 124px;
  height: 25px;
  padding: 0 4px 0 5px;
  background: #fff;
  border: 1px solid #b8d0f0;
  color: #0a6cd6;
  font: bold 15px/22px "Noto Sans CJK SC", sans-serif;
}
.keys svg { width: 16px; height: 16px; }
.watermark {
  position: absolute;
  right: 3px;
  bottom: 10px;
  color: rgba(225, 225, 222, 0.7);
  font-size: 36px;
  line-height: 46px;
  text-shadow: 1px 1px 1px rgba(90, 90, 90, 0.7);
  pointer-events: none;
}
```
